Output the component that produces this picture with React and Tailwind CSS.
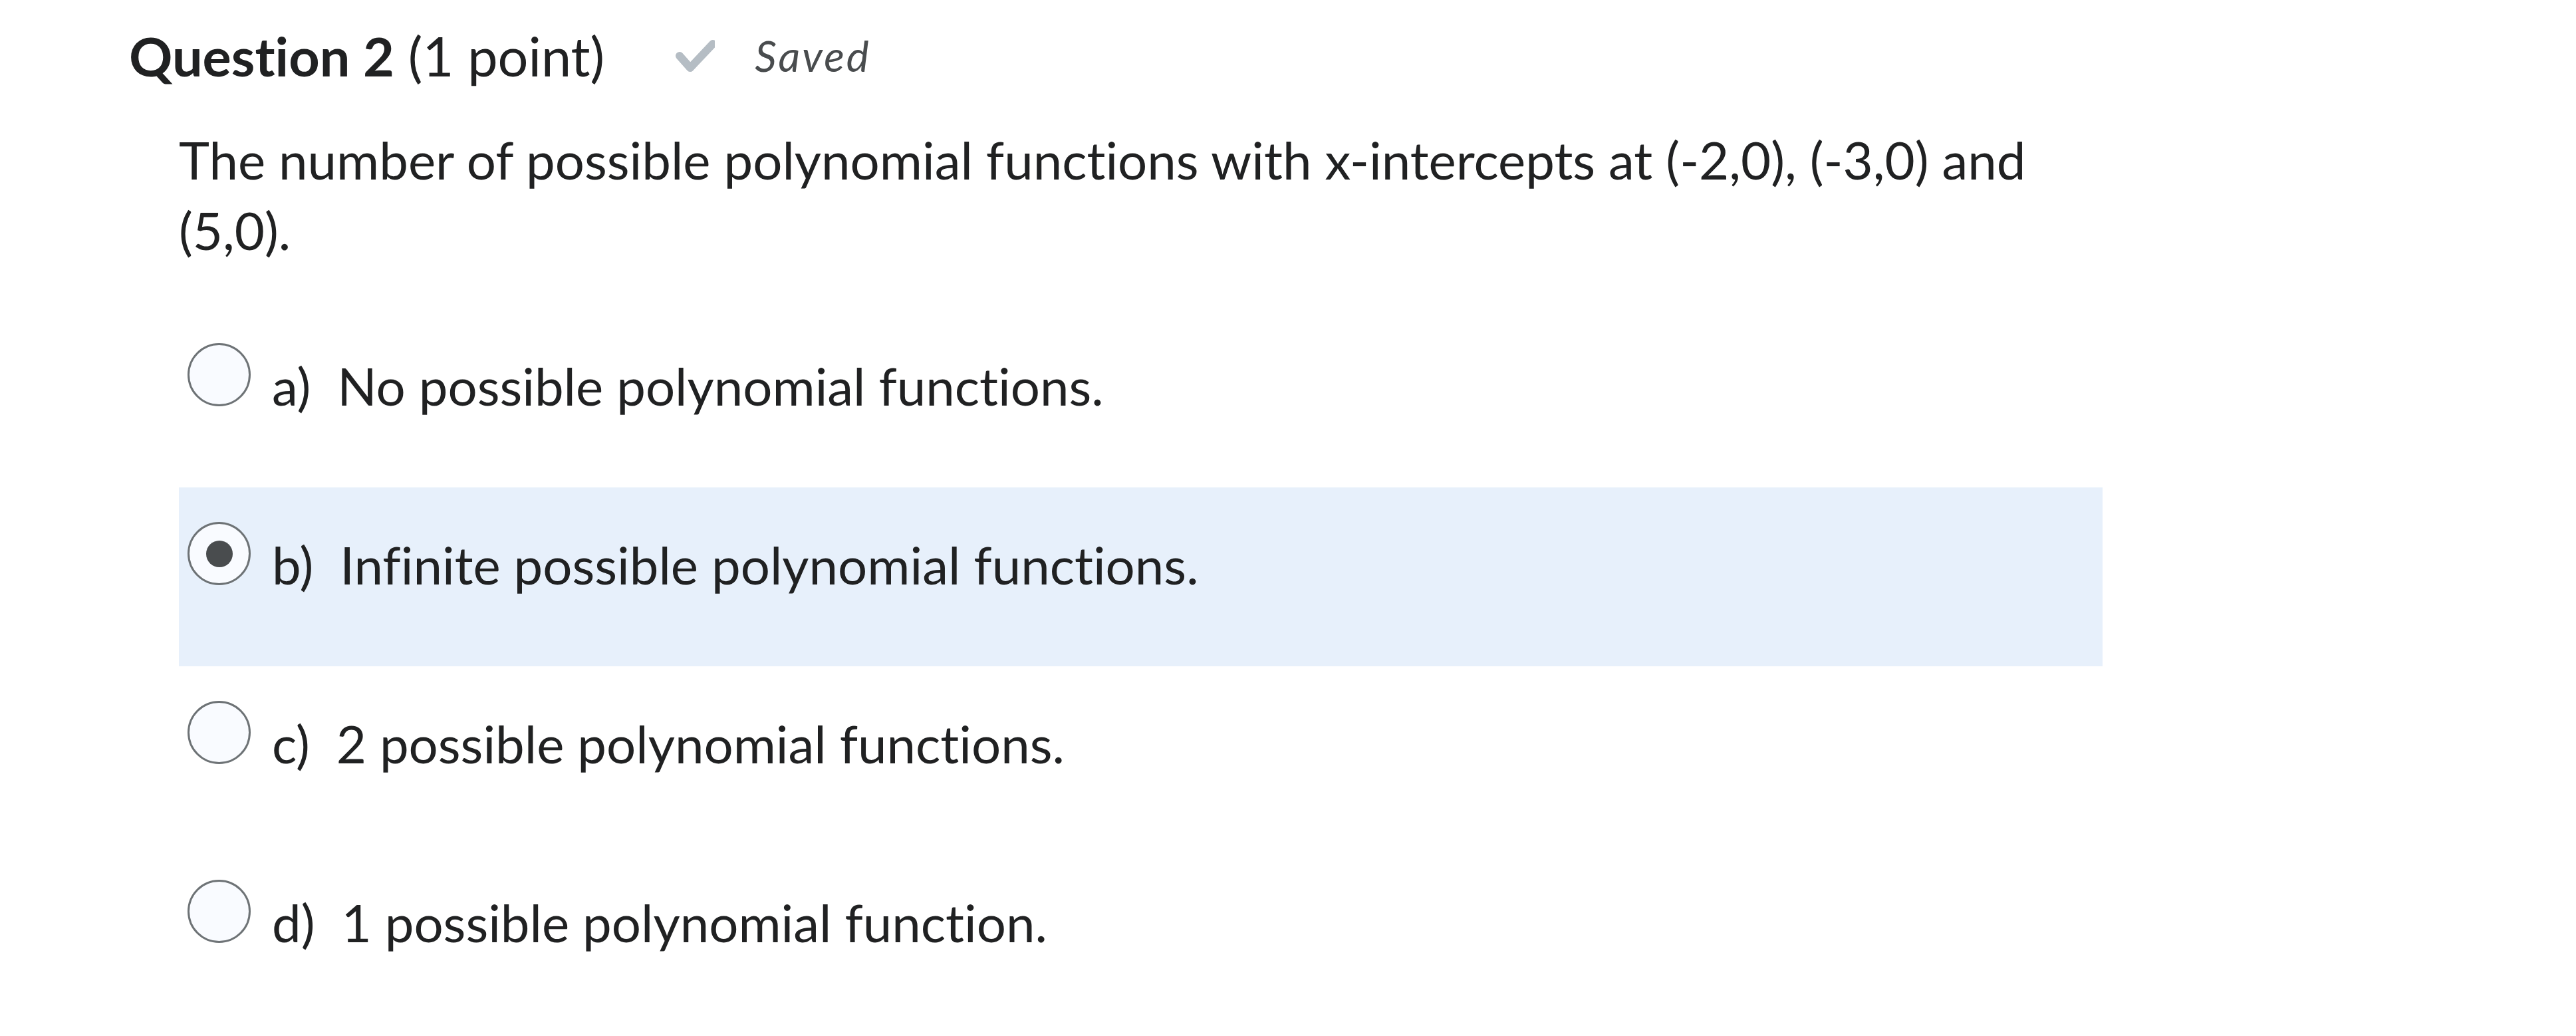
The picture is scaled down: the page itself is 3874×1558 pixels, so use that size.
import React, { useState } from 'react';

const options = [
  { key: 'a', label: 'a)', text: 'No possible polynomial functions.' },
  { key: 'b', label: 'b)', text: 'Infinite possible polynomial functions.' },
  { key: 'c', label: 'c)', text: '2 possible polynomial functions.' },
  { key: 'd', label: 'd)', text: '1 possible polynomial function.' },
];

const Radio = ({ checked }) => (
  <span className="flex h-[95px] w-[95px] shrink-0 items-center justify-center rounded-full border-[3px] border-[#6e7376] bg-[#f9fbff]">
    {checked && <span className="h-[40px] w-[40px] rounded-full bg-[#494c4e]" />}
  </span>
);

export default function App() {
  const [selected, setSelected] = useState('b');

  return (
    <div className="min-h-screen bg-white font-['Lato',sans-serif] text-[#202122] [font-variant-ligatures:none]">
      <div className="flex items-center pl-[194px] pt-[37px]">
        <h2 className="text-[81px] leading-[94px]">
          <span className="font-bold">Question 2</span> (1 point)
        </h2>
        <svg className="ml-[106px] h-[50px] w-[60px]" viewBox="0 0 60 50" fill="none">
          <polyline points="7,25 23,43 57,7" stroke="#b5bdc4" strokeWidth="12" strokeLinecap="round" strokeLinejoin="round" />
        </svg>
        <span className="ml-[60px] text-[64px] italic leading-[72px] tracking-[3px] text-[#494c4e]">Saved</span>
      </div>

      <div className="ml-[269px] w-[2893px]">
        <p className="mt-[56px] text-[78px] leading-[106px]">
          The number of possible polynomial functions with x-intercepts at (-2,0), (-3,0) and (5,0).
        </p>

        <div className="mt-[65px]">
          {options.map((o) => (
            <label
              key={o.key}
              onClick={() => setSelected(o.key)}
              className={`flex h-[269px] cursor-pointer items-start pl-[13px] pt-[52px] ${selected === o.key ? 'bg-[#e7f0fb]' : ''}`}
            >
              <Radio checked={selected === o.key} />
              <span className="ml-[32px] mt-[11px] text-[78px] leading-[106px]">
                {o.label}&nbsp; {o.text}
              </span>
            </label>
          ))}
        </div>
      </div>
    </div>
  );
}
